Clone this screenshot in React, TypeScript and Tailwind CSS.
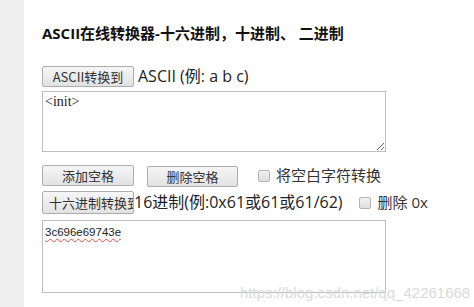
import React from 'react'

const cjk = "font-['Open_Sans','Noto_Sans_CJK_SC',sans-serif]"

function Btn({ label, w }: { label: string; w: string }) {
  return (
    <button
      className={`${w} h-[21px] shrink-0 overflow-hidden whitespace-nowrap rounded-[2px] border border-[#adadad] bg-gradient-to-b from-[#f6f6f6] to-[#e2e2e2] text-center text-[13px] leading-[19px] text-[#333] font-['Noto_Sans_CJK_SC',sans-serif]`}
    >
      {label}
    </button>
  )
}

function Check() {
  return (
    <span className="inline-block h-[12px] w-[12px] shrink-0 rounded-[2px] border border-[#b4b4b4] bg-gradient-to-b from-[#f2f2f2] to-[#dedede]" />
  )
}

export default function App() {
  return (
    <div className="relative flex h-[307px] w-[474px] overflow-hidden bg-white">
      {/* left gray strip */}
      <div className="w-[24px] shrink-0 bg-[#eeeeee]" />

      <div className="flex flex-col pl-[18px] pt-[23px] text-[#222]">
        <h1 className="text-[15px] font-bold leading-[20px] text-[#111] font-['Open_Sans','Noto_Sans_CJK_SC',sans-serif]">
          ASCII在线转换器-十六进制，十进制、 二进制
        </h1>

        <div className="mt-[23px] flex h-[21px] items-center gap-[4px]">
          <Btn label="ASCII转换到" w="w-[92px]" />
          <span className={`${cjk} whitespace-nowrap text-[16px] leading-[21px]`}>ASCII (例: a b c)</span>
        </div>

        <textarea
          defaultValue="<init>"
          spellCheck={false}
          className="mt-[4px] h-[61px] w-[344px] resize-y border border-[#bdbdbd] px-[2px] py-[1px] text-[14px] leading-[17px] text-[#222] outline-none font-['Liberation_Serif',serif]"
        />

        <div className="mt-[13px] flex h-[21px] items-center">
          <Btn label="添加空格" w="w-[92px]" />
          <div className="ml-[13px]">
            <Btn label="删除空格" w="w-[91px]" />
          </div>
          <div className="ml-[20px] flex items-center gap-[6px]">
            <Check />
            <span className={`${cjk} whitespace-nowrap text-[15px] leading-[21px] text-[#333]`}>将空白字符转换</span>
          </div>
        </div>

        <div className="mt-[5px] flex h-[23px] items-center">
          {/* label overflows the button in the original, so the last glyph is clipped */}
          <div className="h-[23px] w-[92px] shrink-0 overflow-hidden whitespace-nowrap rounded-[2px] border border-[#adadad] bg-gradient-to-b from-[#f6f6f6] to-[#e2e2e2] pl-[6px] text-left text-[13px] leading-[21px] text-[#333] font-['Noto_Sans_CJK_SC',sans-serif]">
            十六进制转换到
          </div>
          <span className={`${cjk} whitespace-nowrap text-[16px] leading-[21px]`}>16进制(例:0x61或61或61/62)</span>
          <div className="ml-[16px] flex items-center gap-[7px]">
            <Check />
            <span className={`${cjk} whitespace-nowrap text-[15px] leading-[21px] text-[#333]`}>删除 0x</span>
          </div>
        </div>

        <div className="mt-[6px] h-[73px] w-[344px] border border-[#bdbdbd] bg-white px-[2px] py-[3px] text-[11.5px] leading-[16px] text-[#222] font-['Liberation_Sans',sans-serif]">
          <span className="underline decoration-wavy decoration-[#e05050] decoration-1 underline-offset-2">3c696e69743e</span>
        </div>
      </div>

      {/* watermark */}
      <span className="pointer-events-none absolute left-[240px] top-[283px] whitespace-nowrap text-[15px] leading-[20px] text-[#dadada] font-['Liberation_Sans',sans-serif]">
        https://blog.csdn.net/qq_42261668
      </span>
    </div>
  )
}
